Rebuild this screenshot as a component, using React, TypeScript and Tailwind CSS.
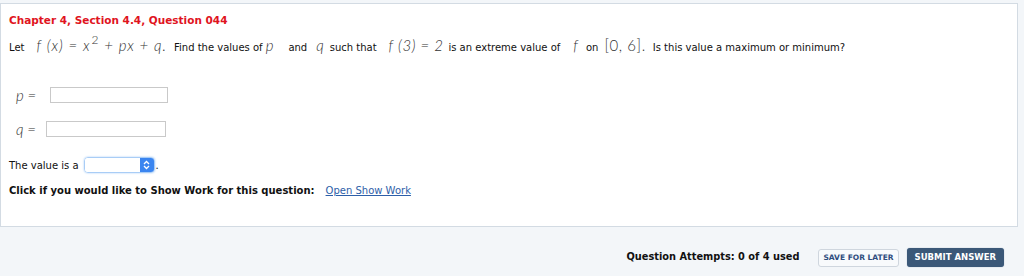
export default function App() {
  const text = { fontFamily: '"DejaVu Sans", Verdana, sans-serif' };
  const math = { fontFamily: 'Lato, "Liberation Sans", Arial, sans-serif' };

  return (
    <div className="w-[1024px] h-[276px] bg-[#f3f6f9] pt-[3px] text-[#111]" style={text}>
      {/* Question panel */}
      <div className="w-[1018px] h-[224px] bg-white border border-[#d3dbe3] pl-[8px] pt-[9px]">
        <h1 className="text-[10.5px] font-bold text-[#e0141e] leading-[14px]">
          Chapter 4, Section 4.4, Question 044
        </h1>

        <div className="flex items-baseline mt-[10px] text-[10px] leading-[16px] whitespace-nowrap">
          <span>Let</span>
          <span className="ml-[12px] text-[15px] italic font-light text-[#333] tracking-[1px]" style={math}>
            f (x) = x<sup className="text-[12px] not-italic relative top-[-7px] ml-[1px]">2</sup> + px + q.
          </span>
          <span className="ml-[7px]">Find the values of</span>
          <span className="ml-[3px] text-[15px] italic font-light text-[#333]" style={math}>p</span>
          <span className="ml-[15px]">and</span>
          <span className="ml-[9px] text-[15px] italic font-light text-[#333]" style={math}>q</span>
          <span className="ml-[6px]">such that</span>
          <span className="ml-[12px] text-[15px] italic font-light text-[#333] tracking-[0.6px]" style={math}>
            f (3) = 2
          </span>
          <span className="ml-[5px]">is an extreme value of</span>
          <span className="ml-[13px] text-[15px] italic font-light text-[#333]" style={math}>f</span>
          <span className="ml-[8px]">on</span>
          <span className="ml-[6px] text-[15px] font-light text-[#333] tracking-[0.6px]" style={math}>[0, 6].</span>
          <span className="ml-[7px]">Is this value a maximum or minimum?</span>
        </div>

        <div className="flex items-center mt-[28px] ml-[7px]">
          <span className="text-[15px] italic font-light text-[#333] w-[34px]" style={math}>p =</span>
          <input className="w-[118px] h-[16px] border border-[#c9c9c9] bg-white" />
        </div>

        <div className="flex items-center mt-[11px] ml-[7px]">
          <span className="text-[15px] italic font-light text-[#333] w-[30px]" style={math}>q =</span>
          <input className="w-[120px] h-[16px] border border-[#c9c9c9] bg-white" />
        </div>

        <div className="flex items-center mt-[17px] text-[10px]">
          <span>The value is a</span>
          <div className="ml-[5px] flex h-[16px] w-[71px] rounded-[4px] border border-[#a9cdf6] shadow-[0_0_2px_#9cc6f5] overflow-hidden">
            <div className="flex-1 bg-white" />
            <div className="w-[14px] bg-[#3a85f0] flex items-center justify-center">
              <svg width="7" height="10" viewBox="0 0 7 10" fill="none" stroke="white" strokeWidth="1.3">
                <path d="M1 4 L3.5 1.5 L6 4" />
                <path d="M1 6 L3.5 8.5 L6 6" />
              </svg>
            </div>
          </div>
          <span className="ml-[1px]">.</span>
        </div>

        <div className="flex items-baseline mt-[10px] text-[10px]">
          <span className="font-bold">Click if you would like to Show Work for this question:</span>
          <a className="ml-[11px] text-[#2d5ea8] underline">Open Show Work</a>
        </div>
      </div>

      {/* Footer */}
      <div className="flex items-center justify-end pr-[20px] mt-[21px] text-[10px]">
        <span className="font-bold text-[9.8px]">Question Attempts: 0 of 4 used</span>
        <button className="ml-[19px] h-[18px] px-[4px] rounded-[3px] border border-[#cfd6de] bg-[#f8fafc] text-[7.5px] font-bold text-[#2f4d7e]">
          SAVE FOR LATER
        </button>
        <button className="ml-[8px] h-[19px] px-[8px] rounded-[3px] bg-[#3b5878] text-[8.5px] font-bold text-white shadow-[0_0_1px_#7d95b0]">
          SUBMIT ANSWER
        </button>
      </div>
    </div>
  );
}
